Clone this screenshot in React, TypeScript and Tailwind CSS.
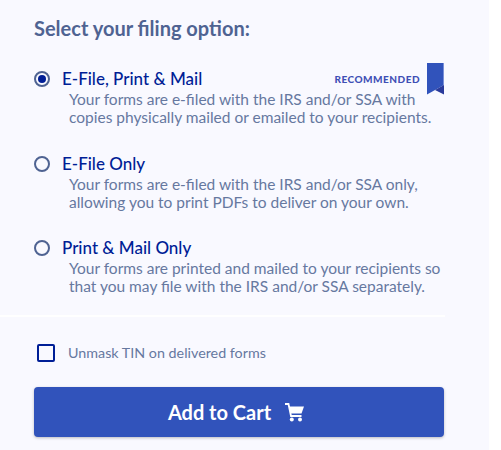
const options = [
  {
    title: 'E-File, Print & Mail',
    lines: ['Your forms are e-filed with the IRS and/or SSA with', 'copies physically mailed or emailed to your recipients.'],
    selected: true,
  },
  {
    title: 'E-File Only',
    lines: ['Your forms are e-filed with the IRS and/or SSA only,', 'allowing you to print PDFs to deliver on your own.'],
  },
  {
    title: 'Print & Mail Only',
    lines: ['Your forms are printed and mailed to your recipients so', 'that you may file with the IRS and/or SSA separately.'],
  },
];

function CartIcon() {
  return (
    <svg width="19" height="19" viewBox="0 0 19 19" fill="none" className="shrink-0">
      <path d="M0 1H3.5L6 13H16.5" stroke="white" strokeWidth="1.8" />
      <path d="M4 3.5H19L16.5 10.5H5.5Z" fill="white" />
      <circle cx="6.8" cy="16.5" r="2" fill="white" />
      <circle cx="15" cy="16.5" r="2" fill="white" />
    </svg>
  );
}

function App() {
  return (
    <div className="w-[501px] h-[450px] overflow-hidden bg-white font-['Lato','Noto_Sans',sans-serif]">
      <div className="w-[489px] h-[450px] bg-[#f9f9ff]">
        <div className="w-[445px] pl-[34px] pt-[15px]">
          <h2 className="text-[20px] leading-[26px] font-bold text-[#4f6392]">Select your filing option:</h2>
          <div className="mt-[27px] flex flex-col gap-[26.5px]">
            {options.map((o) => (
              <div key={o.title} className="relative">
                <div className="flex items-center h-[22px]">
                  <span className="w-[16px] h-[16px] rounded-full border-2 border-[#4f6392] flex items-center justify-center">
                    {o.selected && <span className="w-[8px] h-[8px] rounded-full bg-[#001e96]" />}
                  </span>
                  <span className="ml-[12px] text-[17px] font-medium text-[#001e96]">{o.title}</span>
                </div>
                <div className="pl-[35px] text-[15.5px] leading-[18px] text-[#66789f] whitespace-nowrap">
                  {o.lines.map((l) => (
                    <div key={l}>{l}</div>
                  ))}
                </div>
                {o.selected && (
                  <div className="absolute right-[1px] top-[-5px] flex items-start gap-[7px]">
                    <span className="mt-[9px] text-[10px] leading-[14px] font-black tracking-[0.5px] text-[#3f4fb5]">RECOMMENDED</span>
                    <svg width="17" height="32" viewBox="0 0 17 32" className="shrink-0">
                      <path d="M0 0H17V22L0 31.5Z" fill="#3153bb" />
                      <path d="M16 0H17V22H16Z" fill="#7a90d8" />
                      <path d="M8 27L17 22V31.5Z" fill="#2a3a9b" />
                    </svg>
                  </div>
                )}
              </div>
            ))}
          </div>
        </div>
        <div className="mt-[20px] w-[445px] h-[2px] bg-white" />
        <label className="mt-[25px] ml-[37px] flex items-center gap-[13px]">
          <span className="w-[18px] h-[18px] rounded-[2px] border-2 border-[#001e96]" />
          <span className="text-[14.3px] text-[#66789f]">Unmask TIN on delivered forms</span>
        </label>
        <button className="mt-[24px] ml-[34px] w-[410px] h-[50px] pr-[6px] rounded-[4px] bg-[#3153bb] shadow-[0_1px_3px_rgba(0,0,0,0.25)] flex items-center justify-center gap-[14px] text-white text-[20px] font-bold">
          Add to Cart
          <CartIcon />
        </button>
      </div>
    </div>
  );
}

export default App;
